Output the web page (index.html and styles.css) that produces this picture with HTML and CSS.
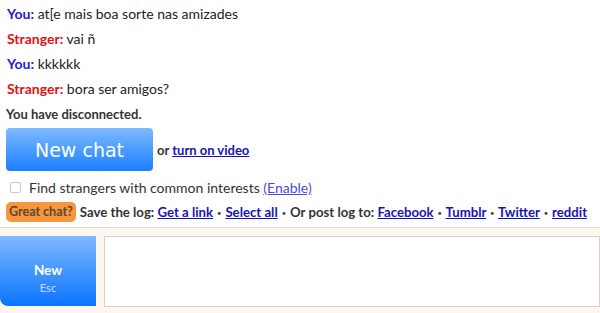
FILE: index.html
```html
<!DOCTYPE html>
<html>
<head>
<meta charset="utf-8">
<link rel="stylesheet" href="styles.css">
</head>
<body>
<div class="page">
  <div class="log">
    <p class="msg"><strong class="you">You:</strong> at[e mais boa sorte nas amizades</p>
    <p class="msg"><strong class="stranger">Stranger:</strong> vai ñ</p>
    <p class="msg"><strong class="you">You:</strong> kkkkkk</p>
    <p class="msg"><strong class="stranger">Stranger:</strong> bora ser amigos?</p>
    <p class="status">You have disconnected.</p>
    <div class="newrow">
      <button class="newchat">New chat</button>
      <span class="or">or <a href="#" class="link">turn on video</a></span>
    </div>
    <div class="interests">
      <span class="checkbox"></span>
      <span>Find strangers with common interests <a href="#" class="enable">(Enable)</a></span>
    </div>
    <div class="saverow">
      <span class="great">Great chat?</span>
      <span class="save">Save the log: <a href="#" class="link">Get a link</a> <span class="dot">•</span> <a href="#" class="link">Select all</a> <span class="dot">•</span> Or post log to: <a href="#" class="link">Facebook</a> <span class="dot">•</span> <a href="#" class="link">Tumblr</a> <span class="dot">•</span> <a href="#" class="link">Twitter</a> <span class="dot">•</span> <a href="#" class="link">reddit</a></span>
    </div>
  </div>
  <div class="bottom">
    <button class="newbtn"><span class="nb-main">New</span><span class="nb-sub">Esc</span></button>
    <div class="textarea"></div>
  </div>
</div>
</body>
</html>
```

FILE: styles.css
```css
* { box-sizing: border-box; }
html, body { margin: 0; padding: 0; }
body {
  width: 600px;
  height: 313px;
  overflow: hidden;
  background: #fcf6ee;
  font-family: "Lato", "Noto Sans", sans-serif;
  color: #222;
}
.page { display: flex; flex-direction: column; height: 100%; }
.log {
  background: #fff;
  padding: 1px 7px 0 6px;
  height: 227px;
}
.msg {
  margin: 0;
  font-size: 14px;
  line-height: 25px;
  height: 25px;
  padding-left: 1px;
}
.you { color: #1d1dcc; }
.stranger { color: #e51111; }
.status {
  margin: 4px 0 0 0;
  font-size: 13px;
  font-weight: bold;
  color: #333;
  line-height: 18px;
}
.newrow { display: flex; align-items: center; margin-top: 5px; }
.newchat {
  width: 147px;
  height: 43px;
  border: none;
  border-radius: 4px;
  background: linear-gradient(#7fbaff, #1a7fff);
  color: #fff;
  font-family: "DejaVu Sans", sans-serif;
  font-size: 19px;
  padding: 0;
}
.or {
  margin-left: 4px;
  font-size: 13px;
  font-weight: bold;
  color: #333;
}
.link { color: #1515b5; font-weight: bold; }
.interests {
  display: flex;
  align-items: center;
  margin-top: 6px;
  font-size: 14px;
  color: #333;
  height: 20px;
}
.checkbox {
  width: 11px;
  height: 11px;
  border: 1px solid #c8c8c8;
  border-radius: 2px;
  margin: 0 8px 0 4px;
  background: #fff;
}
.enable { color: #4a4ae0; }
.saverow {
  display: flex;
  align-items: center;
  margin-top: 5px;
  font-size: 13.2px;
  font-weight: bold;
  color: #333;
  white-space: nowrap;
}
.dot { font-family: "DejaVu Sans", sans-serif; font-size: 10px; font-weight: normal; color: #444; }
.great {
  background: #f7963c;
  color: #5a4632;
  border-radius: 5px;
  padding: 0 3px;
  height: 20px;
  line-height: 20px;
  font-size: 12.5px;
  margin-right: 4px;
}
.bottom {
  flex: 1;
  border-top: 1px solid #e2dcd5;
  padding: 8px 0 0 0;
  display: flex;
  align-items: flex-start;
  gap: 8px;
}
.newbtn {
  width: 96px;
  height: 70px;
  border: none;
  border-radius: 0 0 0 8px;
  background: linear-gradient(#80b9ff, #0a74ff);
  color: #fff;
  display: flex;
  flex-direction: column;
  align-items: center;
  justify-content: center;
  font-family: "Lato", sans-serif;
  padding: 16px 0 0 0;
}
.nb-main { font-size: 13.5px; font-weight: bold; line-height: 18px; }
.nb-sub { font-size: 11px; color: #c4e0ff; line-height: 18px; }
.textarea {
  flex: 1;
  height: 71px;
  background: #fff;
  border: 1px solid #d8d0c8;
}
```
